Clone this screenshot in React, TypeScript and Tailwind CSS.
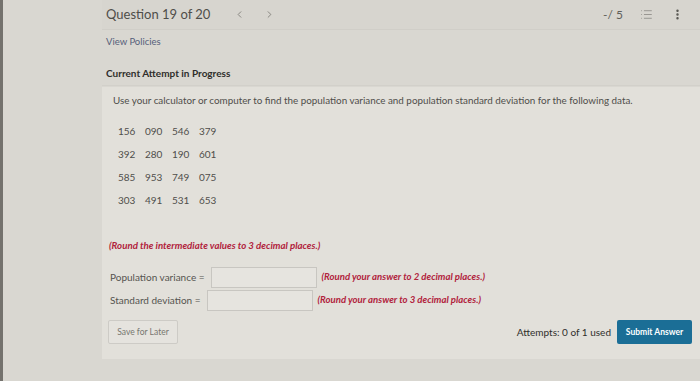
import { ChevronLeft, ChevronRight, List, EllipsisVertical } from "lucide-react";

const data = [
  ["156", "090", "546", "379"],
  ["392", "280", "190", "601"],
  ["585", "953", "749", "075"],
  ["303", "491", "531", "653"],
];

function AnswerRow({ label, hint }: { label: string; hint: string }) {
  return (
    <div className="flex h-[22px] items-center">
      <span className="text-[10px] leading-[14px] text-[#555450]">{label}</span>
      <div className="ml-[6px] h-[21px] w-[106px] border border-[#c8c6c1] bg-[#e6e4df]" />
      <span className="ml-[5px] text-[9.6px] font-bold italic leading-[14px] text-[#b1223c]">{hint}</span>
    </div>
  );
}

export default function App() {
  return (
    <div className="flex h-[381px] w-[700px] overflow-hidden bg-[#d9d7d1] font-['Lato','Noto_Sans',sans-serif]">
      <div className="w-[3px] bg-[#74726d]" />
      <div className="ml-[99px] flex flex-1 flex-col">
        <header className="flex h-[30px] items-center border-b border-[#d0cec8] bg-[#d7d5cf] pl-[4px] pr-[16px]">
          <span className="text-[13px] text-[#4f4e4a]">Question 19 of 20</span>
          <ChevronLeft className="ml-[24px] text-[#66645f]" size={11} strokeWidth={1.5} />
          <ChevronRight className="ml-[19px] text-[#66645f]" size={11} strokeWidth={1.5} />
          <span className="ml-auto text-[12px] text-[#5f5e5a]">-/ 5</span>
          <List className="ml-[17px] text-[#8a8984]" size={13} strokeWidth={1.5} />
          <EllipsisVertical className="ml-[18px] text-[#55544f]" size={13} strokeWidth={2.5} />
        </header>

        <div className="mt-[5px] pl-[4px] text-[9.5px] leading-[14px] text-[#56607a]">View Policies</div>

        <div className="mt-[17px] border-b border-[#d2d0ca] pb-[5px] pl-[4px] text-[10px] font-bold leading-[14px] text-[#2f2e2b]">
          Current Attempt in Progress
        </div>

        <section className="mt-[1px] flex h-[272px] flex-col bg-[#e2e0da] pl-[11px] pr-[8px] pt-[6px]">
          <p className="text-[9.85px] leading-[14px] text-[#4f4e4a]">
            Use your calculator or computer to find the population variance and population standard deviation for the following data.
          </p>

          <div className="mt-[17px] flex flex-col gap-[9px] pl-[5px]">
            {data.map((row, i) => (
              <div key={i} className="flex gap-[10px] text-[10px] leading-[14px] text-[#4f4e4a]">
                {row.map((n, j) => (
                  <span key={j} className="w-[17px]">{n}</span>
                ))}
              </div>
            ))}
          </div>

          <p className="mt-[31px] -ml-[4px] text-[9.7px] font-bold italic leading-[14px] text-[#b1223c]">
            (Round the intermediate values to 3 decimal places.)
          </p>

          <div className="mt-[14px] -ml-[3px] flex flex-col gap-[1px]">
            <AnswerRow label="Population variance =" hint="(Round your answer to 2 decimal places.)" />
            <AnswerRow label="Standard deviation =" hint="(Round your answer to 3 decimal places.)" />
          </div>

          <div className="mt-[9px] -ml-[5px] flex items-center">
            <button className="h-[24px] w-[70px] rounded-[2px] border border-[#cdcbc6] bg-[#e5e3de] text-[8.5px] text-[#77766f]">
              Save for Later
            </button>
            <span className="ml-auto text-[10px] text-[#2f2e2b]">Attempts: 0 of 1 used</span>
            <button className="ml-[6px] h-[24px] w-[75px] rounded-[2px] bg-[#1b6e96] text-[8.5px] font-bold text-white">
              Submit Answer
            </button>
          </div>
        </section>
      </div>
    </div>
  );
}
